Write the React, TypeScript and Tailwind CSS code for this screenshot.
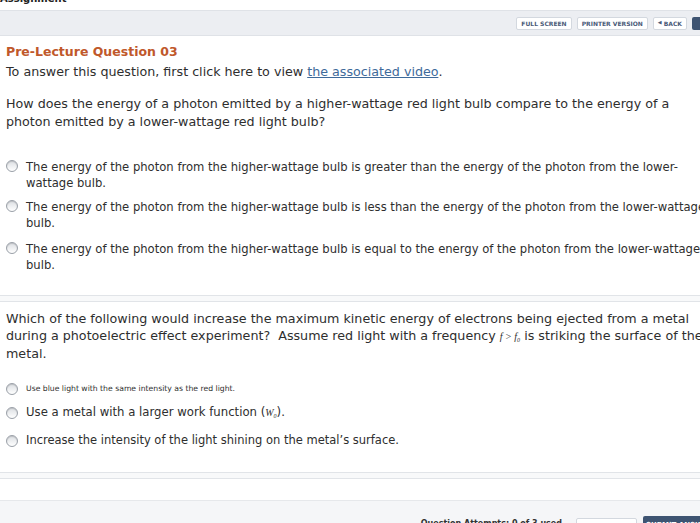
import React from "react";

const Radio = () => (
  <span className="mt-[1px] inline-block h-[12px] w-[12px] shrink-0 rounded-full border border-[#9aa0a8] bg-gradient-to-b from-[#dcdfe3] to-white shadow-[inset_0_1px_1px_rgba(0,0,0,0.15)]" />
);

const Btn = ({ children }: { children: React.ReactNode }) => (
  <span className="flex h-[13px] items-center rounded-[2px] border border-[#d3d8df] bg-white px-[4px] text-[6px] font-bold text-[#4a5a78]">
    {children}
  </span>
);

export default function App() {
  const font = { fontFamily: '"DejaVu Sans", Verdana, sans-serif' } as React.CSSProperties;
  const serif = { fontFamily: '"Liberation Serif", serif' } as React.CSSProperties;
  return (
    <div className="h-[523px] w-[700px] overflow-hidden bg-white text-[#2e2e2e]" style={font}>
      <div className="h-[10px] overflow-hidden">
        <div className="-mt-[9px] text-[10px] font-bold text-[#222]">Assignment</div>
      </div>
      <div className="flex h-[26px] items-center justify-end gap-[5px] border-y border-[#dfe2e7] bg-[#eceef2]">
        <Btn>FULL SCREEN</Btn>
        <Btn>PRINTER VERSION</Btn>
        <Btn>
          <span className="mr-[2px] text-[5px]">◀</span>BACK
        </Btn>
        <span className="h-[13px] w-[8px] rounded-l-[2px] bg-[#3e5472]" />
      </div>

      <div className="px-[6px] pt-[7px]">
        <div className="text-[12.5px] font-bold leading-[18px] text-[#c0582b]">Pre-Lecture Question 03</div>
        <div className="mt-[2px] text-[12.7px] leading-[18px]">
          To answer this question, first click here to view{" "}
          <span className="text-[#3e6a9a] underline">the associated video</span>.
        </div>
        <div className="mt-[14px] text-[12.7px] leading-[18px]">
          How does the energy of a photon emitted by a higher-wattage red light bulb compare to the energy of a photon emitted by a lower-wattage red light bulb?
        </div>
        <div className="mt-[28px] flex flex-col gap-[8px] whitespace-nowrap text-[11.6px] leading-[16px]">
          <div className="flex gap-[8px]">
            <Radio />
            <div>
              The energy of the photon from the higher-wattage bulb is greater than the energy of the photon from the lower-
              <br />
              wattage bulb.
            </div>
          </div>
          <div className="flex gap-[8px]">
            <Radio />
            <div>
              The energy of the photon from the higher-wattage bulb is less than the energy of the photon from the lower-wattage
              <br />
              bulb.
            </div>
          </div>
          <div className="mt-[2px] flex gap-[8px]">
            <Radio />
            <div>
              The energy of the photon from the higher-wattage bulb is equal to the energy of the photon from the lower-wattage
              <br />
              bulb.
            </div>
          </div>
        </div>
      </div>

      <div className="mt-[22px] h-[7px] border-y border-[#e1e4e8] bg-[#f8f9fa]" />

      <div className="px-[6px] pt-[8px]">
        <div className="whitespace-nowrap text-[12.7px] leading-[17px]">
          Which of the following would increase the maximum kinetic energy of electrons being ejected from a metal
          <br />
          during a photoelectric effect experiment?&nbsp; Assume red light with a frequency{" "}
          <span className="text-[10px] italic" style={serif}>
            f &gt; f<sub className="text-[6px]">0</sub>
          </span>{" "}
          is striking the surface of the
          <br />
          metal.
        </div>
        <div className="mt-[20px] flex flex-col">
          <div className="flex items-center gap-[8px] text-[7.7px] leading-[12px]">
            <Radio />
            <span>Use blue light with the same intensity as the red light.</span>
          </div>
          <div className="mt-[9px] flex items-center gap-[8px] text-[11.7px] leading-[16px]">
            <Radio />
            <span>
              Use a metal with a larger work function (
              <span className="text-[10px] italic" style={serif}>
                W<sub className="text-[6px]">0</sub>
              </span>
              ).
            </span>
          </div>
          <div className="mt-[11px] flex items-center gap-[8px] text-[11.5px] leading-[16px]">
            <Radio />
            <span>Increase the intensity of the light shining on the metal’s surface.</span>
          </div>
        </div>
      </div>

      <div className="mt-[24px] h-[7px] border-y border-[#e1e4e8] bg-[#f8f9fa]" />
      <div className="h-[22px] border-b border-[#e6e8eb] bg-white" />
      <div className="flex h-[40px] items-start justify-end gap-[6px] bg-[#f5f6f8] pt-[15px]">
        <span className="mr-[8px] mt-[2px] text-[8px] font-bold text-[#333]">Question Attempts: 0 of 3 used</span>
        <span className="mt-[2px] flex h-[14px] w-[61px] shrink-0 items-center justify-center rounded-[2px] border border-[#d3d8df] bg-white text-[6px] font-bold text-[#4a5a78]">
          SAVE FOR LATER
        </span>
        <span className="-mr-[16px] flex h-[18px] w-[73px] shrink-0 items-center justify-center rounded-l-[2px] bg-[#3e5472] text-[7px] font-bold text-white">
          SUBMIT ANSWER
        </span>
      </div>
    </div>
  );
}
